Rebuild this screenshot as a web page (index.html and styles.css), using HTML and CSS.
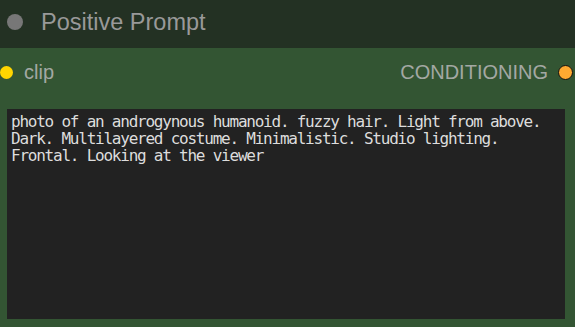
FILE: index.html
```html
<!DOCTYPE html>
<html>
<head>
<meta charset="utf-8">
<link rel="stylesheet" href="styles.css">
</head>
<body>
<div class="node">
  <div class="title">
    <span class="title-dot"></span>
    <span class="title-text">Positive Prompt</span>
  </div>
  <div class="body">
    <div class="slots">
      <div class="slot-in"><span class="dot dot-clip"></span><span class="slot-label">clip</span></div>
      <div class="slot-out"><span class="slot-label">CONDITIONING</span><span class="dot dot-cond"></span></div>
    </div>
    <div class="prompt">photo of an androgynous humanoid. fuzzy hair. Light from above.
Dark. Multilayered costume. Minimalistic. Studio lighting.
Frontal. Looking at the viewer</div>
  </div>
</div>
</body>
</html>
```
FILE: styles.css
```css
html, body {
  margin: 0;
  padding: 0;
  width: 575px;
  height: 327px;
  overflow: hidden;
  background: #335533;
}
.node {
  display: flex;
  flex-direction: column;
  height: 327px;
  font-family: "Liberation Sans", Arial, sans-serif;
}
.title {
  height: 48px;
  background: #233123;
  display: flex;
  align-items: center;
  padding-left: 7px;
  box-sizing: border-box;
}
.title-dot {
  width: 16px;
  height: 16px;
  border-radius: 50%;
  background: #777777;
  margin-right: 18px;
  margin-top: -4px;
}
.title-text {
  color: #999999;
  font-size: 23.5px;
  margin-top: -4px;
}
.body {
  flex: 1;
  background: #335533;
  display: flex;
  flex-direction: column;
  padding: 0 10px 8px 7px;
}
.slots {
  height: 48px;
  margin-bottom: 13px;
  display: flex;
  justify-content: space-between;
  align-items: center;
  margin-left: -7px;
  margin-right: -10px;
}
.slot-in, .slot-out {
  display: flex;
  align-items: center;
}
.slot-label {
  color: #a3a8a3;
  font-size: 20px;
}
.dot {
  width: 13px;
  height: 13px;
  border-radius: 50%;
  box-sizing: border-box;
}
.dot-clip {
  background: #ffd500;
  margin-right: 11px;
  margin-left: 0px;
}
.dot-cond {
  background: #ffa931;
  border: 1.5px solid #111;
  width: 15px;
  height: 15px;
  margin-left: 10px;
  margin-right: 2px;
}
.prompt {
  flex: 1;
  background: #222222;
  color: #dddddd;
  font-family: "DejaVu Sans Mono", monospace;
  font-size: 16px;
  letter-spacing: -1.23px;
  line-height: 17px;
  padding: 4px 4px;
  white-space: pre-wrap;
}
```
